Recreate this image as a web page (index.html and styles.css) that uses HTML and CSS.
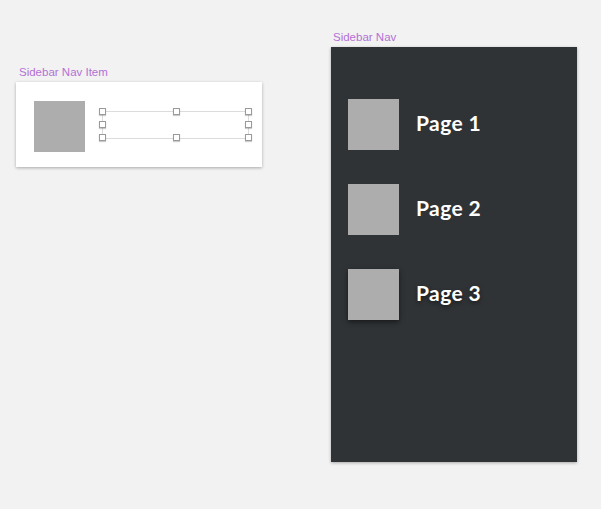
FILE: index.html
```html
<!DOCTYPE html>
<html>
<head>
<meta charset="utf-8">
<link rel="stylesheet" href="styles.css">
</head>
<body>
<div class="canvas">
  <section class="artboard item-board">
    <div class="label">Sidebar Nav Item</div>
    <div class="card">
      <div class="thumb"></div>
      <div class="selection">
        <span class="h h-tl"></span><span class="h h-tm"></span><span class="h h-tr"></span>
        <span class="h h-ml"></span><span class="h h-mr"></span>
        <span class="h h-bl"></span><span class="h h-bm"></span><span class="h h-br"></span>
      </div>
    </div>
  </section>
  <section class="artboard nav-board">
    <div class="label">Sidebar Nav</div>
    <nav class="sidebar">
      <div class="nav-item"><div class="thumb"></div><span class="nav-text">Page 1</span></div>
      <div class="nav-item"><div class="thumb"></div><span class="nav-text">Page 2</span></div>
      <div class="nav-item hover"><div class="thumb"></div><span class="nav-text">Page 3</span></div>
    </nav>
  </section>
</div>
</body>
</html>
```
FILE: styles.css
```css
html, body {
  margin: 0;
  padding: 0;
  background: #f2f2f2;
}
.canvas {
  position: relative;
  width: 601px;
  height: 509px;
  overflow: hidden;
}
.artboard {
  position: absolute;
}
.item-board { left: 16px; top: 66px; }
.nav-board { left: 331px; top: 31px; }
.label {
  font-family: "Liberation Sans", Arial, sans-serif;
  font-size: 11.5px;
  line-height: 13px;
  color: #b370d6;
  margin: 0 0 3px 3px;
  height: 13px;
}
.nav-board .label { margin-left: 2px; }
.card {
  position: relative;
  width: 246px;
  height: 85px;
  background: #fff;
  box-shadow: 0 1px 3px rgba(0,0,0,0.3);
  padding: 19px 0 0 18px;
  box-sizing: border-box;
}
.thumb {
  width: 51px;
  height: 51px;
  background: #adadad;
}
.selection {
  position: absolute;
  left: 86px;
  top: 29px;
  width: 147px;
  height: 28px;
  border-top: 1px solid #dcdcdc;
  border-bottom: 1px solid #dcdcdc;
  box-sizing: border-box;
}
.selection::before, .selection::after {
  content: "";
  position: absolute;
  top: 0;
  bottom: 0;
  width: 1px;
  background: #dcdcdc;
}
.selection::before { left: 0; }
.selection::after { right: 0; }
.h {
  position: absolute;
  width: 7px;
  height: 7px;
  box-sizing: border-box;
  background: #fff;
  border: 1px solid #9a9a9a;
  box-shadow: 0 1px 1px rgba(0,0,0,0.2);
  margin: -4px 0 0 -3px;
  z-index: 1;
}
.h-tl { left: 0; top: 0; }
.h-tm { left: 50%; top: 0; }
.h-tr { left: 100%; top: 0; margin-left: -4px; }
.h-ml { left: 0; top: 50%; }
.h-mr { left: 100%; top: 50%; margin-left: -4px; }
.h-bl { left: 0; top: 100%; }
.h-bm { left: 50%; top: 100%; }
.h-br { left: 100%; top: 100%; margin-left: -4px; }
.sidebar {
  width: 246px;
  height: 415px;
  background: #303336;
  box-shadow: 0 1px 3px rgba(0,0,0,0.3);
  box-sizing: border-box;
  padding: 52px 0 0 17px;
  display: flex;
  flex-direction: column;
  gap: 34px;
}
.nav-item {
  display: flex;
  align-items: center;
  gap: 17px;
}
.nav-text {
  font-family: Lato, "Noto Sans", sans-serif;
  font-weight: 700;
  font-size: 21px;
  color: #fff;
  margin-top: -4px;
  letter-spacing: 0.4px;
}
.nav-item.hover .thumb {
  box-shadow: 0 2px 5px rgba(0,0,0,0.55);
}
.nav-item.hover .nav-text {
  text-shadow: 0 2px 4px rgba(0,0,0,0.5);
}
```
